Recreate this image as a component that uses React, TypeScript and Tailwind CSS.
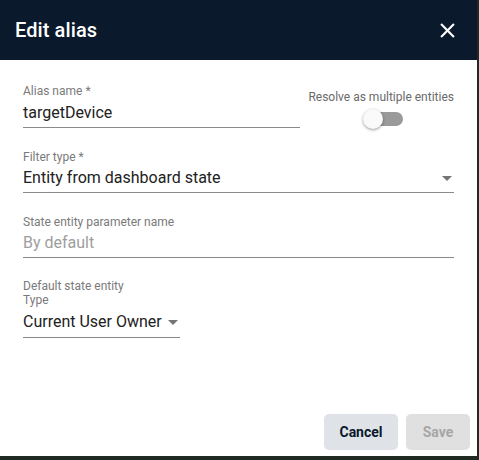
import React from "react";

const font = { fontFamily: "Roboto, 'Noto Sans', Arial, sans-serif" };

function Caret({ className = "" }: { className?: string }) {
  return (
    <svg width="10" height="5" viewBox="0 0 10 5" className={className}>
      <path d="M0 0h10L5 5z" fill="#757575" />
    </svg>
  );
}

export default function App() {
  return (
    <div className="w-[479px] h-[460px] bg-[#1e2a22] overflow-hidden" style={font}>
      <div className="w-[477px] h-[456px] bg-white flex flex-col">
        {/* ── Header ── */}
        <div className="h-[60px] shrink-0 bg-[#0a192c] flex items-center justify-between pl-[15px] pr-[20px]">
          <h2 className="text-[20px] font-medium text-white leading-none tracking-[0.1px]">Edit alias</h2>
          <svg width="15" height="15" viewBox="0 0 14 14" fill="none" stroke="white" strokeWidth="2" className="mr-[2px]">
            <line x1="1" y1="1" x2="13" y2="13" />
            <line x1="13" y1="1" x2="1" y2="13" />
          </svg>
        </div>

        {/* ── Form ── */}
        <div className="flex-1 pl-[23px] pr-[23px] pt-[23px] flex flex-col gap-[21px]">
          <div className="flex items-start">
            <div className="w-[277px] border-b border-[#8a8a8a] pb-[2px]">
              <div className="text-[12px] leading-4 text-[#7a7a7a]">Alias name *</div>
              <div className="mt-[2px] text-[16px] leading-6 text-[#212121]">targetDevice</div>
            </div>
            <div className="flex-1 flex flex-col items-end pt-[6px]">
              <div className="whitespace-nowrap text-[12px] leading-4 text-[#6a6a6a]">Resolve as multiple entities</div>
              <div className="w-[144px] flex justify-center mt-[7px]">
                <div className="relative w-[34px] h-[14px] rounded-full bg-[#9a9a9a] ml-[8px]">
                  <div className="absolute left-[-6px] top-[-3px] w-[20px] h-[20px] rounded-full bg-[#fafafa] shadow-[0_1px_3px_rgba(0,0,0,0.4)]" />
                </div>
              </div>
            </div>
          </div>

          <div className="border-b border-[#8a8a8a] pb-[2px]">
            <div className="text-[12px] leading-4 text-[#7a7a7a]">Filter type *</div>
            <div className="mt-[1px] flex items-center justify-between">
              <span className="text-[16px] leading-6 text-[#212121]">Entity from dashboard state</span>
              <Caret className="mr-[2px]" />
            </div>
          </div>

          <div className="border-b border-[#8a8a8a] pb-[2px]">
            <div className="text-[12px] leading-4 text-[#7a7a7a]">State entity parameter name</div>
            <div className="mt-[1px] text-[16px] leading-6 text-[#9e9e9e]">By default</div>
          </div>

          <div className="w-[157px] border-b border-[#8a8a8a] pb-[3px]">
            <div className="text-[12px] leading-[14px] text-[#7a7a7a]">
              <div>Default state entity</div>
              <div>Type</div>
            </div>
            <div className="mt-[3px] flex items-center gap-[6px]">
              <span className="text-[16px] leading-6 text-[#212121]">Current User Owner</span>
              <Caret />
            </div>
          </div>
        </div>

        {/* ── Footer ── */}
        <div className="flex justify-end gap-2 pr-[7px] pb-[6px]">
          <button className="w-[74px] h-[36px] rounded-[5px] bg-[#dfe3e8] text-[14px] font-bold text-[#0a192c]">Cancel</button>
          <button className="w-[64px] h-[36px] rounded-[5px] bg-[#e0e0e0] text-[14px] font-bold text-[#a6a6a6]">Save</button>
        </div>
      </div>
    </div>
  );
}
